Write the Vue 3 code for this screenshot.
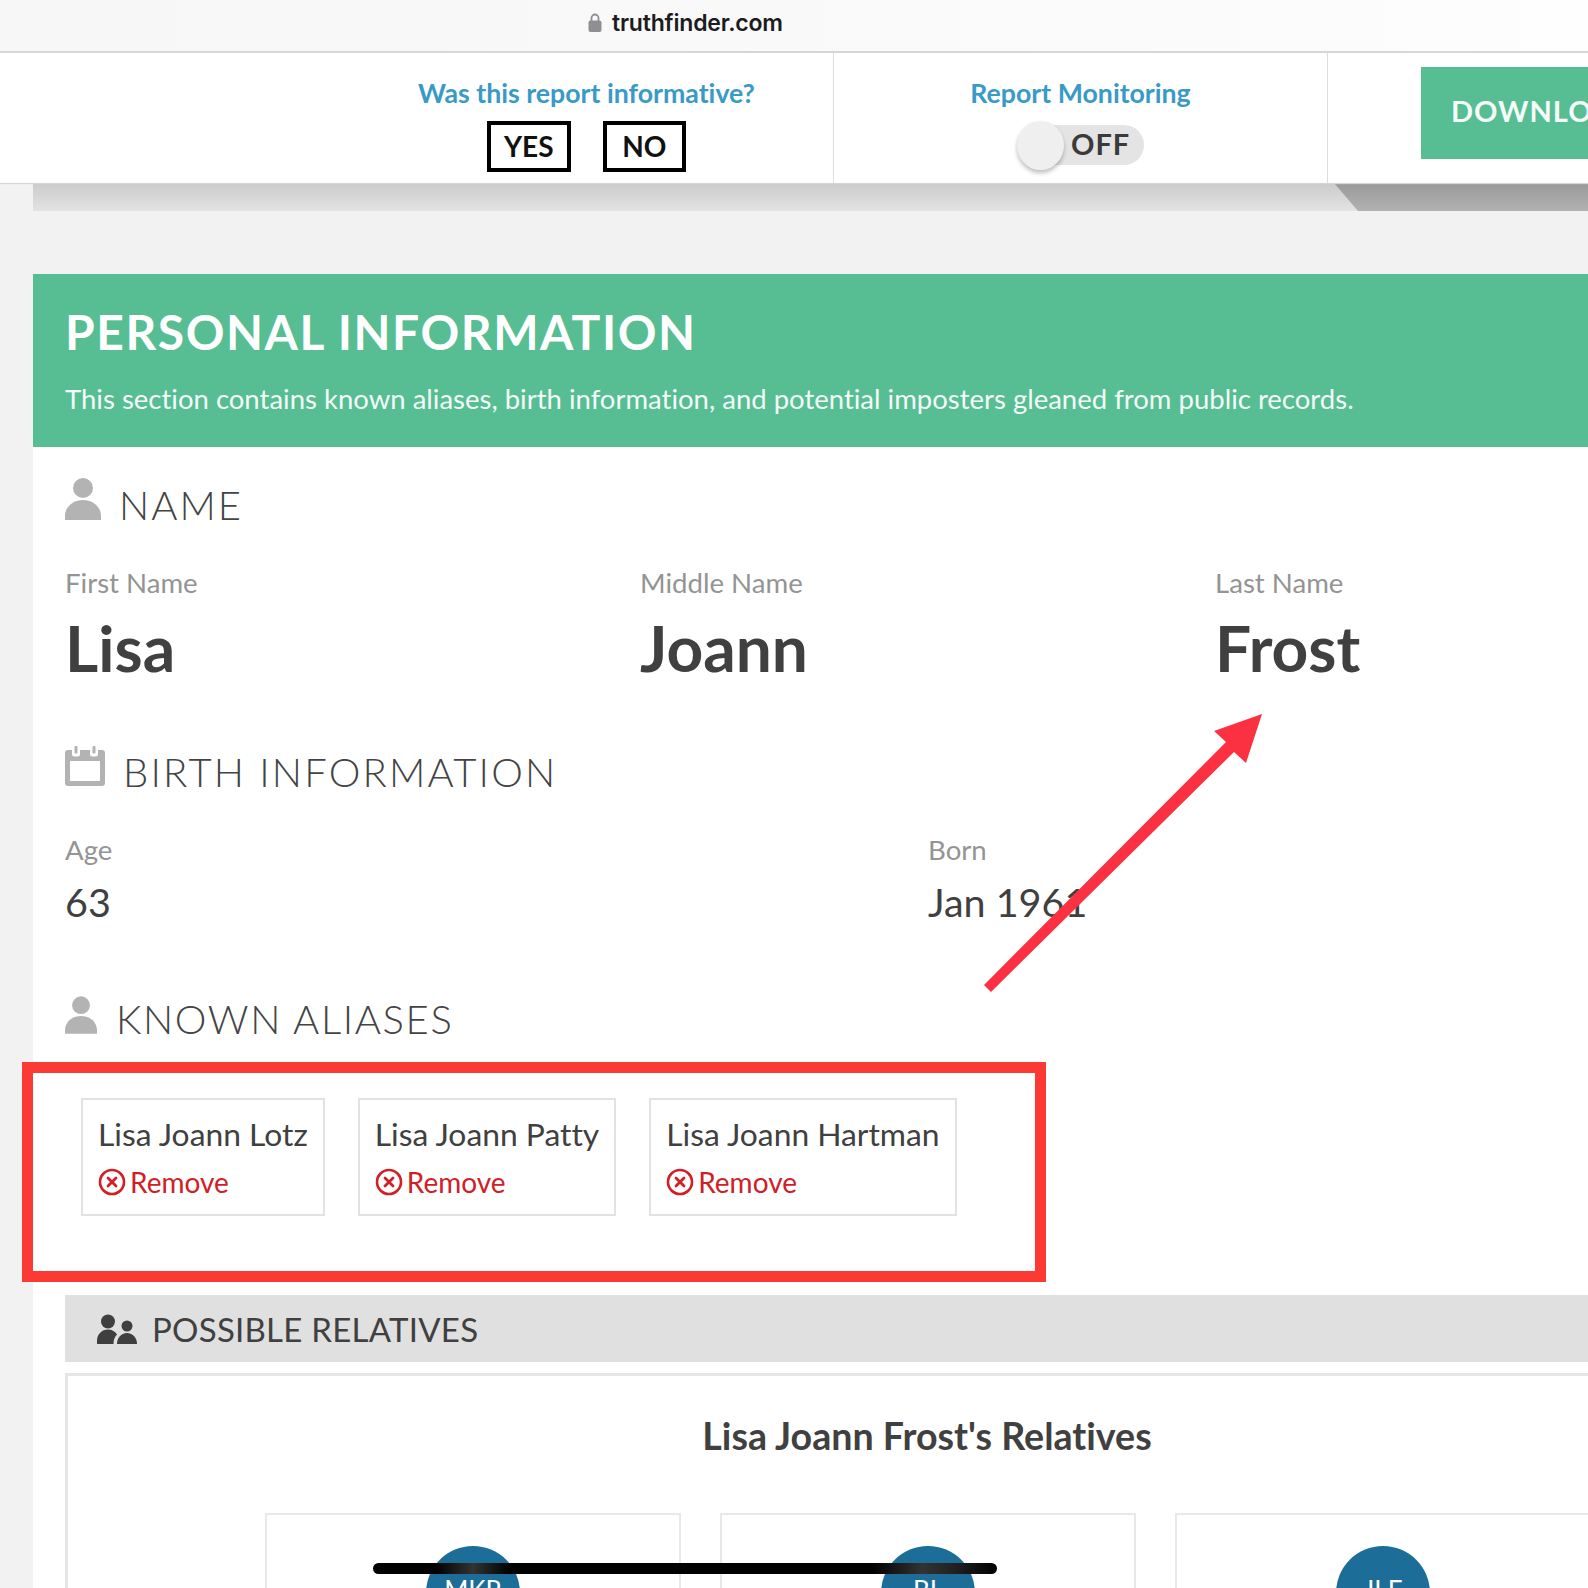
<script setup>
const names = [
  { label: 'First Name', value: 'Lisa' },
  { label: 'Middle Name', value: 'Joann' },
  { label: 'Last Name', value: 'Frost' }
]
const aliases = ['Lisa Joann Lotz', 'Lisa Joann Patty', 'Lisa Joann Hartman']
const relatives = ['MKR', 'BL', 'JLE']
</script>

<template>
  <div class="root">
    <div class="browser">
      <svg class="lock" viewBox="0 0 14 19" width="14" height="19">
        <path d="M3.5 8V5a3.5 3.5 0 0 1 7 0v3" fill="none" stroke="#8e8e93" stroke-width="1.8" />
        <rect x="0.5" y="7.5" width="13" height="11.5" rx="2" fill="#8e8e93" />
      </svg>
      <span class="url">truthfinder.com</span>
    </div>

    <div class="topbar">
      <div class="feedback">
        <div class="ask">Was this report informative?</div>
        <div class="answers">
          <button class="answer">YES</button>
          <button class="answer">NO</button>
        </div>
      </div>
      <div class="monitoring">
        <div class="ask">Report Monitoring</div>
        <div class="toggle"><span class="knob"></span><span class="off">OFF</span></div>
      </div>
      <div class="download"><div class="dl-btn">DOWNLOAD</div></div>
    </div>

    <div class="strip"><div class="strip-dark"></div></div>

    <div class="panel">
      <header class="banner">
        <h1>PERSONAL INFORMATION</h1>
        <p>This section contains known aliases, birth information, and potential imposters gleaned from public records.</p>
      </header>

      <section class="body">
        <h2 class="head head-name">
          <svg class="ico-person" viewBox="0 0 36 42" width="36" height="42">
            <circle cx="18" cy="10" r="10" fill="#b3b3b3" />
            <path d="M0 42V38C0 29 8 22 18 22S36 29 36 38V42Z" fill="#b3b3b3" />
          </svg>
          <span>NAME</span>
        </h2>
        <div class="names">
          <div v-for="n in names" :key="n.label">
            <div class="label">{{ n.label }}</div>
            <div class="big">{{ n.value }}</div>
          </div>
        </div>

        <h2 class="head head-birth">
          <svg class="ico-cal" viewBox="0 0 40 40" width="40" height="40">
            <rect x="0" y="4" width="40" height="36" rx="3" fill="#b3b3b3" />
            <rect x="5" y="15" width="30" height="20" fill="#fff" />
            <rect x="7" y="2" width="8" height="8.500" rx="2.500" fill="#fff" />
            <rect x="25" y="2" width="8" height="8.500" rx="2.500" fill="#fff" />
            <rect x="9.500" y="0" width="3" height="7.500" rx="1" fill="#b3b3b3" />
            <rect x="27.500" y="0" width="3" height="7.500" rx="1" fill="#b3b3b3" />
          </svg>
          <span>BIRTH INFORMATION</span>
        </h2>
        <div class="birth">
          <div>
            <div class="label">Age</div>
            <div class="mid">63</div>
          </div>
          <div>
            <div class="label">Born</div>
            <div class="mid">Jan 1961</div>
          </div>
        </div>

        <h2 class="head head-alias">
          <svg class="ico-person" viewBox="0 0 36 42" width="32" height="38">
            <circle cx="18" cy="10" r="10" fill="#b3b3b3" />
            <path d="M0 42V38C0 29 8 22 18 22S36 29 36 38V42Z" fill="#b3b3b3" />
          </svg>
          <span>KNOWN ALIASES</span>
        </h2>
        <div class="aliases">
          <div v-for="a in aliases" :key="a" class="alias">
            <div class="alias-name">{{ a }}</div>
            <div class="remove">
              <svg viewBox="0 0 28 28" width="28" height="28">
                <circle cx="14" cy="14" r="12" fill="none" stroke="#cf2027" stroke-width="2.600" />
                <path d="M10 10L18 18M18 10L10 18" stroke="#cf2027" stroke-width="2.800" stroke-linecap="round" />
              </svg>
              <span>Remove</span>
            </div>
          </div>
        </div>

        <div class="rel-bar">
          <svg viewBox="0 0 40 30" width="40" height="30">
            <circle cx="11" cy="7.500" r="7" fill="#3f3f3f" />
            <path d="M0 30V27C0 20 5 15.500 11 15.500C15 15.500 18.500 17.500 20 20.500C17.500 23 16.500 26 16.500 30Z" fill="#3f3f3f" />
            <circle cx="30" cy="12" r="5.500" fill="#3f3f3f" />
            <path d="M20 30C20 24 24 19 30 19S40 24 40 30Z" fill="#3f3f3f" />
          </svg>
          <span>POSSIBLE RELATIVES</span>
        </div>

        <div class="rel-box">
          <h3>Lisa Joann Frost's Relatives</h3>
          <div class="rel-cards">
            <div v-for="r in relatives" :key="r" class="rel-card">
              <div class="avatar">{{ r }}</div>
            </div>
          </div>
        </div>
      </section>
    </div>

    <div class="red-box"></div>
    <svg class="arrow" viewBox="0 0 1588 1588" width="1588" height="1588">
      <path d="M984 985L1226 742L1214 731L1262 714L1246 763L1234 752L991 992Z" fill="#fb3040" />
    </svg>
    <div class="home"></div>
  </div>
</template>

<style>
html, body { margin: 0; background: #f2f2f2; }
</style>

<style scoped>
.root {
  position: relative;
  width: 1588px;
  height: 1588px;
  overflow: hidden;
  background: #f2f2f2;
  font-family: Lato, "Liberation Sans", sans-serif;
  font-variant-ligatures: none;
  color: #404040;
}
.browser {
  height: 51px;
  border-bottom: 2px solid #d6d6d6;
  background: linear-gradient(90deg, #f7f7f7, #f9f9f9 50%, #fefefe);
  display: flex;
  align-items: center;
  padding-left: 588px;
  gap: 10px;
  box-sizing: content-box;
}
.lock { margin-top: -7px; }
.url {
  font-family: Inter, "Noto Sans", sans-serif;
  font-size: 23px;
  font-weight: 600;
  letter-spacing: -0.2px;
  color: #1c1c1e;
  margin-top: -6px;
}
.topbar {
  height: 130px;
  display: flex;
  background: #fff;
  box-shadow: 0 1px 1px #d4d4d4;
  position: relative;
  z-index: 1;
}
.feedback {
  width: 834px;
  box-sizing: border-box;
  padding: 23px 0 0 340px;
  text-align: center;
  border-right: 1px solid #ddd;
}
.ask {
  font-size: 26.7px;
  line-height: 34px;
  font-weight: 700;
  color: #3a9ac6;
}
.answers {
  display: flex;
  justify-content: center;
  gap: 32px;
  margin-top: 11px;
}
.answer {
  width: 83.5px;
  height: 51px;
  padding: 0 0 2px;
  border: 4px solid #000;
  background: #fff;
  color: #111;
  font-family: inherit;
  font-size: 28px;
  font-weight: 700;
}
.monitoring {
  width: 494px;
  box-sizing: border-box;
  padding-top: 23px;
  text-align: center;
  border-right: 1px solid #ddd;
}
.toggle {
  position: relative;
  width: 127px;
  height: 40px;
  margin: 15px auto 0;
  margin-left: 183px;
  border-radius: 20px;
  background: #e4e4e4;
  text-align: left;
}
.knob {
  position: absolute;
  left: 0;
  top: -4px;
  width: 47px;
  height: 49px;
  border-radius: 50%;
  background: #efefef;
  box-shadow: 0 3px 4px rgba(0, 0, 0, 0.25);
}
.off {
  position: absolute;
  left: 54px;
  top: 0;
  font-size: 29px;
  line-height: 38px;
  font-weight: 700;
  color: #3a3a3a;
  letter-spacing: 1px;
}
.download { flex: 1; padding: 14px 0 0 93px; overflow: hidden; }
.dl-btn {
  width: 300px;
  height: 92px;
  box-sizing: border-box;
  padding-left: 30px;
  background: #57bd93;
  color: #f4fbf8;
  font-size: 29px;
  line-height: 88px;
  font-weight: 700;
  letter-spacing: 1px;
}
.strip {
  position: relative;
  height: 28px;
  margin-left: 33px;
  background: linear-gradient(#cbcbcb, #e3e3e3);
}
.strip-dark {
  position: absolute;
  left: 1301px;
  top: 0;
  right: 0;
  bottom: 0;
  background: linear-gradient(#999, #b2b2b2);
  clip-path: polygon(0 0, 100% 0, 100% 100%, 24px 100%);
}
.panel {
  width: 1756px;
  margin: 63px 0 0 33px;
  background: #fff;
  height: 1400px;
}
.banner {
  height: 173px;
  box-sizing: border-box;
  padding: 28px 0 0 32px;
  background: #57bd93;
  color: #fff;
}
.banner h1 {
  margin: 0;
  font-size: 48px;
  line-height: 60px;
  font-weight: 700;
  letter-spacing: 1.55px;
}
.banner p {
  margin: 19px 0 0;
  font-size: 27.5px;
  line-height: 36px;
  font-weight: 400;
  color: #f3fbf8;
}
.body { padding-left: 32px; }
.head {
  display: flex;
  align-items: baseline;
  margin: 0;
  font-size: 40px;
  line-height: 50px;
  font-weight: 300;
  letter-spacing: 2px;
  color: #444;
}
.head-name { margin-top: 31px; gap: 18px; }
.head-birth { margin-top: 60px; gap: 18px; letter-spacing: 2.2px; }
.ico-cal { transform: translateY(-1px); }
.head-alias { margin-top: 69px; gap: 19px; letter-spacing: 1.6px; }
.names {
  display: grid;
  grid-template-columns: repeat(3, 575px);
  margin-top: 35px;
}
.label {
  font-size: 27.6px;
  line-height: 36px;
  color: #949494;
}
.big {
  font-size: 64px;
  line-height: 78px;
  font-weight: 700;
  margin-top: 8px;
  color: #404040;
}
.birth {
  display: grid;
  grid-template-columns: 863px auto;
  margin-top: 35px;
}
.mid {
  font-size: 39.5px;
  line-height: 46px;
  margin-top: 11px;
  color: #404040;
}
.aliases {
  display: flex;
  gap: 33px;
  margin: 54px 0 0 16px;
}
.alias {
  box-sizing: border-box;
  height: 118px;
  padding: 14px 15px 0;
  border: 2px solid #e2e2e2;
}
.alias-name {
  font-size: 31.8px;
  line-height: 40px;
  color: #404040;
  white-space: nowrap;
}
.remove {
  display: flex;
  align-items: center;
  gap: 4px;
  margin-top: 11px;
  font-size: 28px;
  line-height: 34px;
  color: #cf2027;
}
.rel-bar {
  display: flex;
  align-items: center;
  gap: 15px;
  height: 67px;
  margin-top: 79px;
  padding-left: 32px;
  background: #e0e0e0;
  font-size: 33px;
  letter-spacing: 0.25px;
  color: #404040;
}
.rel-box {
  margin-top: 11px;
  border: 3px solid #e6e6e6;
  height: 500px;
  text-align: center;
}
.rel-box h3 {
  margin: 35px 0 0;
  font-size: 37.6px;
  line-height: 50px;
  font-weight: 700;
  color: #404040;
  width: 1718px;
}
.rel-cards {
  display: flex;
  gap: 39px;
  margin: 52px 0 0 197px;
}
.rel-card {
  box-sizing: border-box;
  width: 416px;
  height: 300px;
  padding-top: 31px;
  border: 2px solid #e8e8e8;
}
.avatar {
  width: 94px;
  height: 94px;
  margin: 0 auto;
  border-radius: 50%;
  background: #1c6d98;
  color: #fff;
  font-size: 26px;
  line-height: 88px;
}
.red-box {
  position: absolute;
  left: 22px;
  top: 1062px;
  width: 1024px;
  height: 220px;
  box-sizing: border-box;
  border: 11.500px solid #fb3b33;
}
.arrow { position: absolute; left: 0; top: 0; }
.home {
  position: absolute;
  left: 373px;
  top: 1563px;
  width: 624px;
  height: 11px;
  border-radius: 6px;
  background: linear-gradient(90deg, #000 10%, #333 16%, #000 22%, #000 80%, #333 88%, #222 93%, #000 100%);
}
</style>
